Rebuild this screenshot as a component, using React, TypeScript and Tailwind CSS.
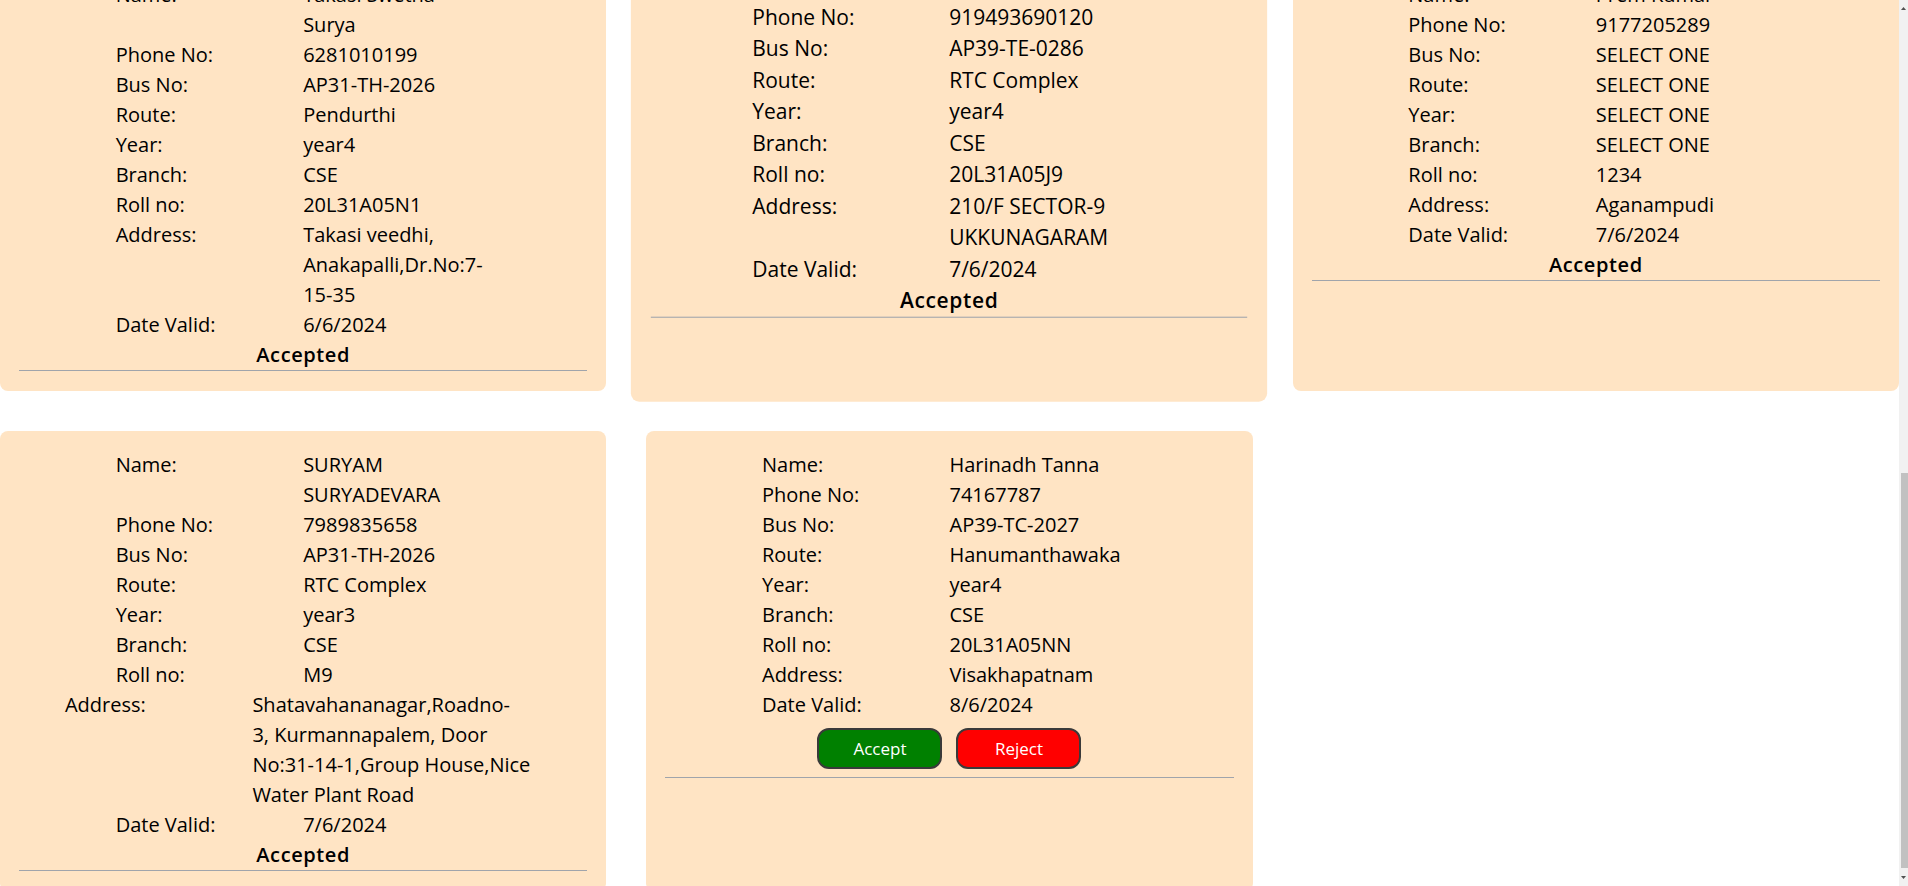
import React from 'react';

type Pass = {
  name: string;
  phone: string;
  bus: string;
  route: string;
  year: string;
  branch: string;
  roll: string;
  address: string;
  date: string;
  accepted: boolean;
  wideAddress?: boolean;
  hovered?: boolean;
};

const passes: Pass[] = [
  {
    name: 'Takasi Swetha Surya',
    phone: '6281010199',
    bus: 'AP31-TH-2026',
    route: 'Pendurthi',
    year: 'year4',
    branch: 'CSE',
    roll: '20L31A05N1',
    address: 'Takasi veedhi, Anakapalli,Dr.No:7-15-35',
    date: '6/6/2024',
    accepted: true,
  },
  {
    name: 'Sai Kiran',
    phone: '919493690120',
    bus: 'AP39-TE-0286',
    route: 'RTC Complex',
    year: 'year4',
    branch: 'CSE',
    roll: '20L31A05J9',
    address: '210/F SECTOR-9 UKKUNAGARAM',
    date: '7/6/2024',
    accepted: true,
    hovered: true,
  },
  {
    name: 'Prem Kumar',
    phone: '9177205289',
    bus: 'SELECT ONE',
    route: 'SELECT ONE',
    year: 'SELECT ONE',
    branch: 'SELECT ONE',
    roll: '1234',
    address: 'Aganampudi',
    date: '7/6/2024',
    accepted: true,
  },
  {
    name: 'SURYAM SURYADEVARA',
    phone: '7989835658',
    bus: 'AP31-TH-2026',
    route: 'RTC Complex',
    year: 'year3',
    branch: 'CSE',
    roll: 'M9',
    address: 'Shatavahananagar,Roadno-\n3, Kurmannapalem, Door\nNo:31-14-1,Group House,Nice\nWater Plant Road',
    date: '7/6/2024',
    accepted: true,
    wideAddress: true,
  },
  {
    name: 'Harinadh Tanna',
    phone: '74167787',
    bus: 'AP39-TC-2027',
    route: 'Hanumanthawaka',
    year: 'year4',
    branch: 'CSE',
    roll: '20L31A05NN',
    address: 'Visakhapatnam',
    date: '8/6/2024',
    accepted: false,
  },
];

const Row: React.FC<{ label: string; value: string; wide?: boolean }> = ({ label, value, wide }) => (
  <div className="flex justify-center">
    <div className="w-[187.5px] shrink-0">{label}</div>
    <div className={wide ? 'w-[289px] shrink-0 whitespace-pre-line' : 'w-[187.5px] shrink-0'}>{value}</div>
  </div>
);

const PassCard: React.FC<{ pass: Pass }> = ({ pass }) => (
  <div
    className={`rounded-lg bg-[#ffe4c4] pt-[19px] pb-[20px] text-[20px] leading-[30px] ${
      pass.hovered ? 'scale-105' : ''
    }`}
  >
    <Row label="Name:" value={pass.name} />
    <Row label="Phone No:" value={pass.phone} />
    <Row label="Bus No:" value={pass.bus} />
    <Row label="Route:" value={pass.route} />
    <Row label="Year:" value={pass.year} />
    <Row label="Branch:" value={pass.branch} />
    <Row label="Roll no:" value={pass.roll} />
    <Row label="Address:" value={pass.address} wide={pass.wideAddress} />
    <Row label="Date Valid:" value={pass.date} />

    {pass.accepted ? (
      <div className="text-center font-semibold tracking-[0.03em]">Accepted</div>
    ) : (
      <div className="mt-2 flex justify-center gap-[14px]">
        <button className="h-[41px] w-[125px] rounded-[12px] border-2 border-[#3a3a3a] bg-[#008000] text-[17px] text-white">
          Accept
        </button>
        <button className="h-[41px] w-[125px] rounded-[12px] border-2 border-[#3a3a3a] bg-[#ff0000] text-[17px] text-white">
          Reject
        </button>
      </div>
    )}

    <hr className={`mx-[19px] border-t border-[#a0a4ab] ${pass.accepted ? '' : 'mt-2'}`} />
  </div>
);

const ScrollBar: React.FC = () => (
  <div className="flex w-[9px] shrink-0 flex-col bg-[#f1f1f1]">
    <div className="flex h-[17px] items-center justify-center">
      <svg width="5" height="3" viewBox="0 0 5 3">
        <path d="M0 3 L2.5 0 L5 3 Z" fill="#505050" />
      </svg>
    </div>
    <div className="h-[456px]" />
    <div className="ml-[2px] h-[395px] bg-[#c1c1c1]" />
    <div className="flex flex-1 items-center justify-center">
      <svg width="5" height="3" viewBox="0 0 5 3">
        <path d="M0 0 L2.5 3 L5 0 Z" fill="#505050" />
      </svg>
    </div>
  </div>
);

export default function App() {
  return (
    <div className="flex h-[886px] w-full overflow-hidden bg-white font-['Open_Sans',sans-serif] text-black">
      <main className="min-w-0 flex-1">
        <div className="-mt-[39px] grid grid-cols-3 gap-10">
          {passes.map((p) => (
            <PassCard key={p.roll + p.phone} pass={p} />
          ))}
        </div>
      </main>
      <ScrollBar />
    </div>
  );
}
